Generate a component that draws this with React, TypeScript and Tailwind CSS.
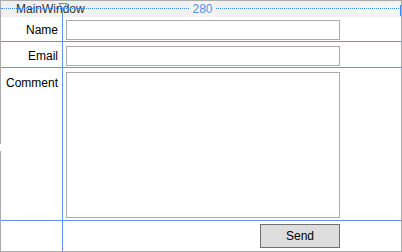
import React from 'react'

const font = "font-['Liberation_Sans',Arial,sans-serif]"

function TitleBar() {
  return (
    <div className="relative h-[16px] bg-[#f0f0f0] flex items-start">
      <span className="pl-[15px] leading-[16px] text-[12px] text-[#333333]">MainWindow</span>
      <div className="ml-auto mr-[2px] mt-[2px] flex gap-[2px]">
        <div className="w-[12px] h-[12px] bg-[#f5f5f5]" />
        <div className="w-[12px] h-[12px] bg-[#f5f5f5]" />
        <div className="w-[12px] h-[12px] bg-[#f5f5f5]" />
      </div>

      {/* designer adornments */}
      <div className="absolute left-0 right-[2px] top-[7px] border-t border-dotted border-[#3f8cf0]" />
      <div className="absolute left-[189px] top-0 w-[25px] h-[16px] bg-[#f4f4f4] text-center leading-[16px] text-[12px] text-[#5a8fe8]">
        280
      </div>
      <div className="absolute right-[0px] top-[4px] w-[1px] h-[11px] bg-[#3f8cf0]" />
      <svg className="absolute left-[57px] top-[1px]" width="10" height="8" viewBox="0 0 10 8">
        <path d="M1 1.5 L9 1.5 L5 7 Z" fill="none" stroke="#5b8fe6" strokeWidth="1" />
      </svg>
      <div className="absolute left-[61px] top-[7px] w-[1px] h-[9px] bg-[#6495ed]" />
    </div>
  )
}

function Row({
  label,
  labelPad,
  height,
  children,
  last,
}: {
  label?: string
  labelPad?: string
  height: string
  children?: React.ReactNode
  last?: boolean
}) {
  return (
    <div className={`flex ${height} ${last ? '' : 'border-b border-[#6495ed]'}`}>
      <div className={`w-[62px] shrink-0 border-r border-[#6495ed] pr-[4px] text-right text-[12px] leading-[16px] text-black ${labelPad ?? ''}`}>
        {label}
      </div>
      <div className="flex-1 flex flex-col">{children}</div>
    </div>
  )
}

export default function App() {
  return (
    <div className={`relative w-[402px] h-[252px] bg-white ${font}`}>
      <div className="h-full border border-[#ababab] flex flex-col">
        <TitleBar />
        <Row label="Name" labelPad="pt-[5px]" height="h-[25px]">
          <div className="ml-[3px] mt-[3px] w-[274px] h-[20px] border border-[#ababab] bg-white" />
        </Row>
        <Row label="Email" labelPad="pt-[6px]" height="h-[26px]">
          <div className="ml-[3px] mt-[4px] w-[274px] h-[20px] border border-[#ababab] bg-white" />
        </Row>
        <Row label="Comment" labelPad="pt-[7px]" height="h-[153px]">
          <div className="ml-[3px] mt-[4px] w-[274px] h-[146px] border border-[#ababab] bg-white" />
        </Row>
        <Row height="flex-1" last>
          <button className="ml-[197px] mt-[3px] w-[80px] h-[24px] border border-[#707070] bg-[#dddddd] text-[12px] leading-[16px] text-black">
            Send
          </button>
        </Row>
      </div>

      {/* small break in the window's left edge */}
      <div className="absolute left-0 top-[144px] w-[1px] h-[7px] bg-white" />
    </div>
  )
}
